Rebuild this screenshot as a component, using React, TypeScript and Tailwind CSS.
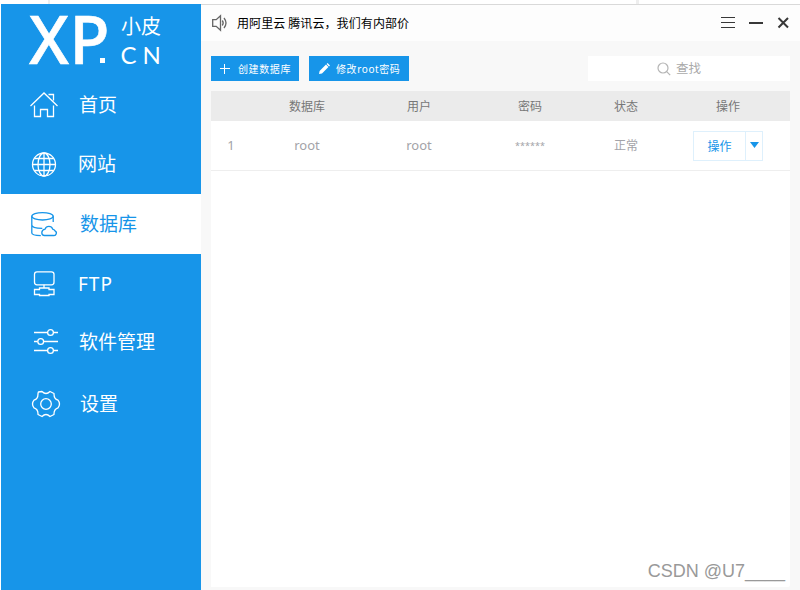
import type { ReactNode } from 'react';

const SANS = "font-['Noto_Sans','Noto_Sans_CJK_SC',sans-serif]";
const CJK = "font-['Noto_Sans_CJK_SC',sans-serif]";

function Logo() {
  return (
    <svg width="200" height="70" viewBox="1 4 200 70" fill="#fff" className="block shrink-0 overflow-visible">
      <g className="font-['Noto_Sans',sans-serif]" fontWeight="500" fontSize="67" stroke="#fff" strokeWidth="0.600">
        <text x="29" y="64.300" textLength="40" lengthAdjust="spacingAndGlyphs">X</text>
        <text x="69.500" y="64.300" textLength="40" lengthAdjust="spacingAndGlyphs">P</text>
      </g>
      <rect x="100" y="58" width="5" height="5" />
      <text x="121" y="34" fontSize="20" className="font-['Noto_Sans_CJK_SC',sans-serif]">小皮</text>
      <g className="font-['Lato',sans-serif]" fontSize="24">
        <text x="120.500" y="63.500">C</text>
        <text x="142.500" y="63.500">N</text>
      </g>
    </svg>
  );
}

function Icon({ children }: { children: ReactNode }) {
  return (
    <svg width="34" height="34" viewBox="0 0 34 34" fill="none" stroke="currentColor" strokeWidth="1.300" className="block shrink-0">
      {children}
    </svg>
  );
}

/* Each 34px box sits at x=27 and is centred in its 60px row. */
const home = (
  <Icon>
    <path d="M3.500 19 17 6l13.500 13M21.500 7.500h5v6M7.500 18.500V29.500H13.500V22.500H20.500V29.500H26.500V18.500" />
  </Icon>
);
const globe = (
  <Icon>
    <circle cx="17" cy="17.500" r="11.500" />
    <ellipse cx="17" cy="17.500" rx="6" ry="11.500" />
    <path d="M17 6v23M5.500 17.500h23M7.500 11.500h19M7.500 23.500h19" />
  </Icon>
);
const database = (
  <Icon>
    <ellipse cx="15.500" cy="9.300" rx="10.700" ry="3.700" />
    <path d="M4.800 9.300V26c0 1.500 3.500 2.500 9 2.600M26.200 9.300V15M4.800 18c0 2 4 3.200 10.500 3.300" />
    <path d="M17.500 28.500h9a2.500 2.500 0 0 0 1.500-4.700c-.7-1.200-1.400-1.500-2.300-1.700a4 4 0 0 0-7.600 0c-1.500.3-3.300 1.500-3.300 3.600 0 1.600 1.300 2.800 2.700 2.800z" />
  </Icon>
);
const ftp = (
  <Icon>
    <rect x="7.500" y="4.800" width="19.500" height="13" rx="2.500" />
    <path d="M17 17.800v3M12.500 21h9.500v1.500h5v5h-5v1h-9.500v-1h-5v-5h5z" />
  </Icon>
);
const sliders = (
  <Icon>
    <path d="M7 5.500h13.500M26.500 5.500H31M7 14.500h3.500M16.500 14.500H31M7 23.500h13.500M26.500 23.500H31" />
    <circle cx="23.500" cy="5.500" r="2.900" />
    <circle cx="13.700" cy="14.500" r="2.900" />
    <circle cx="23.500" cy="23.500" r="2.900" />
  </Icon>
);
const gear = (
  <Icon>
    <circle cx="19" cy="17" r="5.300" />
    <path strokeLinejoin="round" d="M11.400 5 15 4.500Q19 8.400 23 4.500L27 6.500Q26.800 12 31 13.200Q34 17 31 20.800Q26.800 22 27 27.500L23 29.500Q19 25.600 15 29.500L11 27.500Q11.200 22 7 20.800Q4 17 7 13.200Q11.200 12 11 6.500z" />
  </Icon>
);

const items = [
  { label: '首页', icon: home, shift: 'pl-[18px] pt-[2px]' },
  { label: '网站', icon: globe, shift: 'pl-[17px]' },
  { label: '数据库', icon: database, shift: 'pl-[19px]', active: true },
  { label: 'FTP', icon: ftp, shift: 'pl-[17px] tracking-[1px]' },
  { label: '软件管理', icon: sliders, shift: 'pl-[18px] pb-[4px]' },
  { label: '设置', icon: gear, shift: 'pl-[19px]' },
];

function Sidebar() {
  return (
    <aside className="flex w-[200px] shrink-0 flex-col bg-[#1795e9]">
      <Logo />
      <nav>
        {items.map((item) => (
          <a
            key={item.label}
            className={`flex h-[60px] items-center pl-[26px] ${item.active ? 'bg-white text-[#1795e9]' : 'text-white'}`}
          >
            {item.icon}
            <span className={`whitespace-nowrap text-[19px] leading-[28px] ${item.shift}`}>{item.label}</span>
          </a>
        ))}
      </nav>
    </aside>
  );
}

function TitleBar() {
  return (
    <header className="flex h-[37px] items-center border-t border-[#d9d9d9] bg-[#fdfdfd] pl-[10px] pr-[10px]">
      <svg width="18" height="20" viewBox="0 0 18 20" fill="none" stroke="#666" strokeWidth="1.300">
        <path d="M1.700 6.700h3.500L9.500 2.700v14.600l-4.300-4H1.700zM11.300 7.500q1.800 2.500 0 5M13 5q4 5 0 10" />
      </svg>
      <span className={`ml-[8px] whitespace-nowrap text-[12px] tracking-[0.100px] text-black ${CJK}`}>用阿里云 腾讯云，我们有内部价</span>
      <svg width="72" height="16" viewBox="0 0 72 16" fill="none" stroke="#383838" className="ml-auto">
        <path d="M3 2.500h14M3 7.500h14M3 12.500h14" />
        <path strokeWidth="2" d="M31 8h14M60.500 3l9.500 9.500M70 3l-9.500 9.500" />
      </svg>
    </header>
  );
}

function Toolbar() {
  const button = 'flex h-[25px] items-center bg-[#1795e9] whitespace-nowrap text-[10px] tracking-[0.600px] text-white';
  return (
    <div className="flex h-[50px] items-center pt-[5px]">
      <button className={`${button} w-[88px] pl-[9px]`}>
        <svg width="10" height="10" viewBox="0 0 10 10" stroke="#fff" className="mr-[8px]">
          <path d="M0 4.500h10M4.500 0v10" />
        </svg>
        <span className="pt-[2px]">创建数据库</span>
      </button>
      <button className={`${button} ml-[10px] w-[100px] pl-[10px]`}>
        <svg width="11" height="11" viewBox="0 0 11 11" fill="#fff" className="mr-[6px]">
          <path d="M0 11l.6-3L7 1.600 9.400 4 3 10.400zM7.600 1 8.600 0 11 2.400 10 3.400z" />
        </svg>
        <span className="pt-[2px]">修改root密码</span>
      </button>
      <label className="ml-auto flex h-[25px] w-[202px] items-center justify-center bg-white pr-[20px] text-[12.500px] text-[#aaa]">
        <svg width="14" height="14" viewBox="0 0 14 14" fill="none" stroke="#b5b5b5" strokeWidth="1.200" className="mr-[5px]">
          <circle cx="6" cy="6" r="5" />
          <path d="m9.700 9.700 3.500 3.500" />
        </svg>
        <span className="pt-[2px]">查找</span>
      </label>
    </div>
  );
}

const columns = 'grid grid-cols-[40px_112px_112px_110px_82px_122px] items-center text-center';

function Table() {
  return (
    <section className="h-[496px] rounded-br-[2px] bg-white text-[12px]">
      <div className={`${columns} h-[30px] bg-[#ebebeb] pt-[2px] text-[#777]`}>
        <span />
        <span>数据库</span>
        <span>用户</span>
        <span>密码</span>
        <span>状态</span>
        <span>操作</span>
      </div>
      <div className={`${columns} h-[50px] border-b border-[#eee] text-[#a3a3a8]`}>
        <span className="text-[13px]">1</span>
        <span className="pt-px text-[13px]">root</span>
        <span className="pt-px text-[13px]">root</span>
        <span className="pt-px text-[9px]">******</span>
        <span className="pt-px">正常</span>
        <div className="ml-[26px] flex h-[30px] w-[70px] border border-[#def0fc] text-[#1795e9]">
          <span className="flex w-[51px] items-center justify-center pt-[2px]">操作</span>
          <span className="flex flex-1 items-center justify-center border-l border-[#def0fc]">
            <svg width="9" height="6" viewBox="0 0 9 6" fill="currentColor" className="-mt-[2px]">
              <path d="M0 0h9L4.500 6z" />
            </svg>
          </span>
        </div>
      </div>
    </section>
  );
}

export default function App() {
  return (
    <div className={`flex h-[590px] w-[800px] flex-col overflow-hidden bg-white ${SANS}`}>
      <div className="flex h-[4px] shrink-0 pl-[48px]">
        <i className="w-[2px] bg-[#eee]" />
        <i className="ml-[586px] w-[3px] bg-[#eee]" />
      </div>
      <div className="flex min-h-0 flex-1 pl-px">
        <Sidebar />
        <main className="relative flex min-w-0 flex-1 flex-col bg-[#f8f8f8]">
          <TitleBar />
          <div className="px-[10px]">
            <Toolbar />
            <Table />
          </div>
          <span className="absolute right-[15px] bottom-[6px] whitespace-nowrap font-['Liberation_Sans',sans-serif] text-[18px] leading-[26px] text-[#999]">
            CSDN @U7____
          </span>
        </main>
      </div>
    </div>
  );
}
